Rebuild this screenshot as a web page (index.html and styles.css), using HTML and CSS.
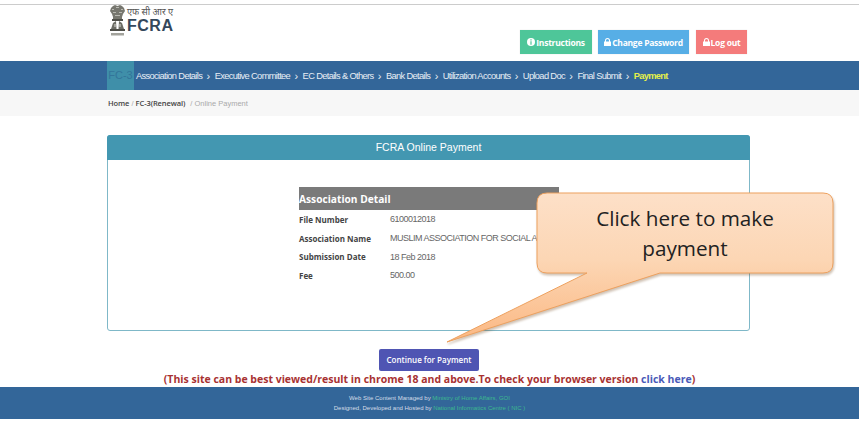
FILE: index.html
```html
<!DOCTYPE html>
<html lang="en">
<head>
 <meta charset="utf-8"/>
 <title>FCRA Online Payment</title>
<link rel="stylesheet" href="styles.css">
</head>
<body>
<header class="top">
 <div class="logo">
  <svg class="emblem" width="15" height="31" viewBox="0 0 15 31">
   <path d="M3 1 L5 0 L7.500 1 L10 0 L12 1 L14 3 L15 6 L13 9 L12 12 L12 14 L3 14 L3 12 L2 9 L0 6 L1 3 Z" fill="#77776f"/>
   <path d="M2 4h2v1H2zM6 2h3v1H6zM11 4h2v1h-2zM3 7h3v1H3zM9 7h3v1H9zM5 10h5v1H5z" fill="#b9b9b2"/>
   <path d="M2 14h11v2H2z" fill="#4f4f49"/>
   <path d="M1 24 L3 18 L6 16 L6.500 24 Z M8.500 24 L9 16 L12 18 L14 24 Z" fill="#6d6d66"/>
   <path d="M4 19h2v3H4zM9 19h2v3H9z" fill="#a5a59e"/>
   <path d="M0 24h15v2H0z" fill="#4f4f49"/>
   <path d="M1 28h13v2.500H1z" fill="#a3a39c"/>
  </svg>
  <div class="logo-text">
   <div class="logo-hindi">एफ सी आर ए</div>
   <div class="logo-name">FCRA</div>
  </div>
 </div>
 <div class="top-btns">
  <a class="tbtn green">
   <svg class="ic" width="8" height="8" viewBox="0 0 8 8"><circle cx="4" cy="4" r="4" fill="#fff"/><path d="M3.400 1.200h1.200v1.200H3.400zM3.400 3.200h1.200v3.600H3.400z" fill="#4ec699"/></svg>Instructions</a>
  <a class="tbtn blue">
   <svg class="ic" width="7" height="8" viewBox="0 0 7 8"><path d="M1 3.500V2.500a2.500 2.500 0 0 1 5 0V3.500H7V8H0V3.500ZM2 3.500H5V2.500a1.500 1.500 0 0 0-3 0Z" fill="#fff"/></svg>Change Password</a>
  <a class="tbtn red">
   <svg class="ic" width="7" height="8" viewBox="0 0 7 8"><path d="M1 3.500V2.500a2.500 2.500 0 0 1 5 0V3.500H7V8H0V3.500ZM2 3.500H5V2.500a1.500 1.500 0 0 0-3 0Z" fill="#fff"/></svg>Log out</a>
 </div>
</header>

<nav class="nav">
 <span class="fc">FC-3</span>
 <span>Association Details</span><i>&rsaquo;</i>
 <span>Executive Committee</span><i>&rsaquo;</i>
 <span>EC Details &amp; Others</span><i>&rsaquo;</i>
 <span>Bank Details</span><i>&rsaquo;</i>
 <span>Utilization Accounts</span><i>&rsaquo;</i>
 <span>Upload Doc</span><i>&rsaquo;</i>
 <span>Final Submit</span><i>&rsaquo;</i>
 <span class="cur">Payment</span>
</nav>

<div class="crumb"><b>Home</b> <em>/</em> <b>FC-3(Renewal)</b> <em class="last">/ Online Payment</em></div>

<section class="panel">
 <div class="panel-head">FCRA Online Payment</div>
 <div class="panel-body">
  <div class="detail">
   <div class="detail-head">Association Detail</div>
   <div class="row"><label>File Number</label><span>6100012018</span></div>
   <div class="row"><label>Association Name</label><span>MUSLIM ASSOCIATION FOR SOCIAL AC</span></div>
   <div class="row"><label>Submission Date</label><span>18 Feb 2018</span></div>
   <div class="row"><label>Fee</label><span>500.00</span></div>
  </div>
 </div>
</section>

<div class="pay"><a class="paybtn">Continue for Payment</a></div>
<p class="best">(This site can be best viewed/result in chrome 18 and above.To check your browser version <a>click here</a>)</p>

<footer class="foot">
 <div>Web Site Content Managed by <a>Ministry of Home Affairs, GOI</a></div>
 <div>Designed, Developed and Hosted by <a>National Informatics Centre ( NIC )</a></div>
</footer>

<div class="callout">
 <svg width="410" height="160" viewBox="0 0 410 160">
  <defs>
   <linearGradient id="peach" x1="0" y1="0" x2="0" y2="1">
    <stop offset="0" stop-color="#fde0c8"/>
    <stop offset="0.45" stop-color="#fcd6b4"/>
    <stop offset="1" stop-color="#fbb883"/>
   </linearGradient>
  </defs>
  <path d="M103 13 Q103 3 113 3 L389 3 Q399 3 399 13 L399 73 Q399 83 389 83 L226 83 L13 152 L153 83 L113 83 Q103 83 103 73 Z" fill="url(#peach)" stroke="#eda15f" stroke-width="1"/>
 </svg>
 <div class="callout-text">Click here to make payment</div>
</div>
</body>
</html>
```

FILE: styles.css
```css
html, body { margin: 0; padding: 0; }
body {
  position: relative;
  height: 422px;
  overflow: hidden;
  background: #fff;
  font-family: "Liberation Sans", Arial, sans-serif;
  color: #444;
}
.top {
  display: flex;
  justify-content: space-between;
  height: 56px;
  margin-top: 4px;
  padding: 0 112px 0 110px;
  border-top: 1px solid #ccc;
}
.logo { display: flex; gap: 2px; align-items: flex-start; }
.emblem { display: block; }
.logo-hindi { font: 9.2px/13px "Noto Sans", "DejaVu Sans", sans-serif; color: #555; }
.logo-name {
  margin-top: 1px;
  font: bold 16px/14px "Liberation Sans", sans-serif;
  color: #33475b;
  letter-spacing: 0.5px;
}
.top-btns { display: flex; gap: 6px; padding-top: 25px; align-items: flex-start; }
.tbtn {
  display: flex;
  align-items: center;
  justify-content: center;
  gap: 1px;
  height: 24px;
  font: bold 8.5px "Open Sans", sans-serif;
  letter-spacing: -0.25px;
  color: #fff;
  box-shadow: 0 0 1px rgba(0,0,0,.15);
}
.green { width: 72px; background: #4ec699; }
.blue { width: 91px; background: #57aee6; }
.red { width: 51px; margin-left: 1px; background: #f47b7b; }
.nav {
  display: flex;
  align-items: center;
  height: 29px;
  padding-left: 107px;
  background: #336699;
  color: #e8eef5;
  font-size: 9.3px;
  letter-spacing: -0.65px;
}
.nav .fc {
  align-self: stretch;
  width: 27px;
  margin-right: 2px;
  background: #3f8fa9;
  color: #33759a;
  font-size: 11px;
  letter-spacing: 0;
  line-height: 29px;
  text-align: center;
}
.nav i { font-style: normal; margin: 0 4.4px; font-size: 11px; letter-spacing: 0; }
.nav .cur { color: #e6f04a; font-weight: bold; letter-spacing: -0.7px; }
.crumb {
  height: 26px;
  padding-left: 108px;
  background: #f7f7f7;
  font: 7.5px/26px "Liberation Sans", sans-serif;
  color: #aaa;
}
.crumb b { font-family: "Open Sans", sans-serif; color: #444; font-weight: 600; letter-spacing: -0.1px; }
.crumb em { font-style: normal; }
.crumb .last { margin-left: 3px; }
.panel {
  width: 641px;
  height: 194px;
  margin: 19px 0 0 107px;
  border: 1px solid #7fb8c8;
  border-radius: 3px;
}
.panel-head {
  height: 25px;
  margin: -1px -1px 0;
  background: #4397b1;
  border-radius: 3px 3px 0 0;
  color: #fff;
  font-size: 10.5px;
  line-height: 25px;
  text-align: center;
}
.panel-body { padding: 27px 0 0 191px; }
.detail { width: 260px; }
.detail-head {
  height: 23px;
  background: #7a7a7a;
  color: #fff;
  font: bold 10.2px/24px "Open Sans", sans-serif;
}
.row {
  display: flex;
  height: 18.7px;
  white-space: nowrap;
  align-items: center;
}
.row label {
  flex: none;
  width: 91px;
  font: bold 8px "Open Sans", sans-serif;
  color: #444;
}
.row span { font-size: 9px; letter-spacing: -0.5px; color: #666; }
.pay { margin-top: 18px; padding-right: 1px; text-align: center; height: 23px; }
.paybtn {
  display: inline-block;
  width: 100px;
  height: 22px;
  background: #4f55b3;
  border-radius: 2px;
  color: #fff;
  font: 600 8px/22px "Open Sans", sans-serif;
}
.best {
  height: 15px;
  margin: 0;
  color: #a83232;
  font: bold 10.5px/15px "Open Sans", sans-serif;
  text-align: center;
}
.best a { color: #4a5ab8; }
.foot {
  height: 32px;
  padding-top: 6px;
  box-sizing: border-box;
  background: #336699;
  color: #d5dde8;
  font-size: 6px;
  line-height: 10px;
  text-align: center;
}
.foot a { color: #3cb98f; }
.callout {
  position: absolute;
  left: 434px;
  top: 190px;
  width: 410px;
  height: 160px;
}
.callout svg { display: block; filter: drop-shadow(1px 2px 1px rgba(120,80,40,.35)); }
.callout-text {
  position: absolute;
  left: 133px;
  top: 13px;
  width: 236px;
  color: #222;
  font: 20.7px/30px "Open Sans", sans-serif;
  text-align: center;
}
```
